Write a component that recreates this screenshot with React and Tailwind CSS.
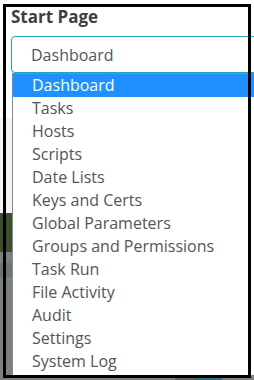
import React from "react";

const pages = [
  "Dashboard",
  "Tasks",
  "Hosts",
  "Scripts",
  "Date Lists",
  "Keys and Certs",
  "Global Parameters",
  "Groups and Permissions",
  "Task Run",
  "File Activity",
  "Audit",
  "Settings",
  "System Log",
];

export default function App() {
  const selected = "Dashboard";

  return (
    <div
      className="relative w-[254px] h-[380px] overflow-hidden bg-[#7c8080]"
      style={{ fontFamily: '"Open Sans", "Liberation Sans", sans-serif' }}
    >
      {/* Page behind the open select */}
      <div className="flex flex-col">
        <div className="h-[118px] bg-white pl-[11px] pt-[5px]">
          <label className="block text-[17px] font-bold leading-[24px] text-[#3f3f3f]">Start Page</label>
          <div className="mt-[7px] w-[260px] h-[37px] rounded-[4px] border border-[#1ea5b8] flex items-center pl-[19px] text-[16px] text-[#555]">
            {selected}
          </div>
        </div>
        <div className="h-[95px] bg-[#f1f3f4]"></div>
        <div className="h-[39px] bg-[#3a4f2a]"></div>
        <div className="h-[11px] bg-[#7b7f80]"></div>
        <div className="h-[14px] bg-[#6e7375]"></div>
        <div className="h-[100px] bg-[#7c8080]"></div>
        <div className="flex h-[3px]">
          <div className="w-[175px] bg-[#7c8080]"></div>
          <div className="w-[20px] bg-[#5f6466]"></div>
          <div className="w-[27px] bg-[#2f6f80]"></div>
          <div className="flex-1 bg-[#7c8080]"></div>
        </div>
      </div>

      {/* Native option list */}
      <ul className="absolute left-[12px] top-[73px] w-[250px] h-[302px] bg-white border-l border-t border-[#8a8a8a] text-[16px] text-[#555]">
        {pages.map((p) => (
          <li
            key={p}
            className={`h-[23px] leading-[23px] pl-[19px] whitespace-nowrap ${
              p === selected ? "bg-[#1e90ff] text-white" : ""
            }`}
          >
            {p}
          </li>
        ))}
      </ul>

      {/* Annotation frame */}
      <div className="absolute left-[3px] top-[4px] w-[248px] h-[374px] border-[3px] border-black pointer-events-none"></div>
    </div>
  );
}
